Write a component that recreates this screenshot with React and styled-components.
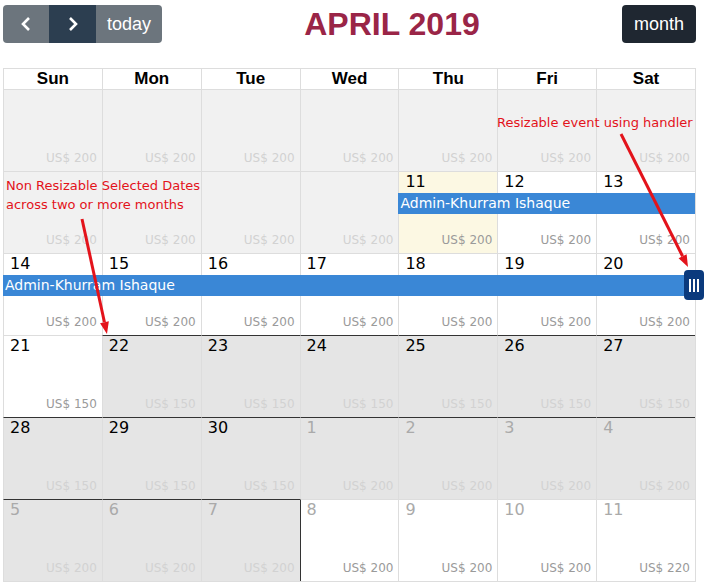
import React from "react";
import styled, { createGlobalStyle } from "styled-components";

const GlobalStyle = createGlobalStyle`
  body {
    margin: 0;
    background: #fff;
    font-family: "DejaVu Sans", Verdana, sans-serif;
  }
  * {
    box-sizing: border-box;
  }
`;

const Root = styled.div`
  position: relative;
  width: 705px;
  height: 588px;
  padding: 5px 9px 0 3px;
`;

const Toolbar = styled.div`
  display: flex;
  justify-content: space-between;
  align-items: center;
  height: 38px;
`;

const ButtonGroup = styled.div`
  display: flex;
  border-radius: 4px;
  overflow: hidden;
`;

const Button = styled.button`
  display: flex;
  align-items: center;
  justify-content: center;
  height: 38px;
  width: ${(p) => p.$w}px;
  padding: 0;
  border: none;
  border-radius: ${(p) => (p.$alone ? "4px" : "0")};
  background: ${(p) => p.$bg};
  color: #fff;
  font-family: "Liberation Sans", Arial, sans-serif;
  font-size: 18px;
`;

const Title = styled.h2`
  margin: 0;
  font-family: "Liberation Sans", Arial, sans-serif;
  font-weight: bold;
  font-size: 32px;
  line-height: 38px;
  color: #9a2547;
`;

const Calendar = styled.div`
  margin-top: 25px;
  border-right: 1px solid #ddd;
  border-bottom: 1px solid #ddd;
`;

const HeadRow = styled.div`
  display: grid;
  grid-template-columns: repeat(7, 1fr);
`;

const HeadCell = styled.div`
  height: 21px;
  border-top: 1px solid #ddd;
  border-left: 1px solid #ddd;
  text-align: center;
  font-family: "Liberation Sans", Arial, sans-serif;
  font-weight: bold;
  font-size: 17px;
  line-height: 20px;
  color: #000;
`;

const Week = styled.div`
  display: grid;
  grid-template-columns: repeat(7, 1fr);
  grid-template-rows: 22px 21px 1fr;
  height: 82px;
`;

const Cell = styled.div`
  grid-row: 1 / -1;
  grid-column: ${(p) => p.$col};
  display: flex;
  flex-direction: column;
  padding: 0 5px 5px 6px;
  border-top: 1px solid ${(p) => (p.$topDark ? "#333" : "#ddd")};
  border-left: 1px solid ${(p) => (p.$leftDark ? "#333" : "#ddd")};
  background: ${(p) => p.$bg};
`;

const DayNum = styled.div`
  height: 20px;
  font-size: 16px;
  line-height: 20px;
  color: ${(p) => (p.$muted ? "#aaa" : "#000")};
`;

const Price = styled.div`
  margin-top: auto;
  text-align: right;
  font-size: 12px;
  line-height: 16px;
  color: ${(p) => (p.$faint ? "#d2d2d2" : "#9a9a9a")};
`;

const Event = styled.div`
  position: relative;
  z-index: 1;
  grid-row: 2;
  grid-column: ${(p) => p.$span};
  height: 21px;
  padding-left: 2px;
  background: #3a87d6;
  color: #fff;
  font-size: 14px;
  line-height: 21px;
  white-space: nowrap;
`;

const Handle = styled.div`
  position: absolute;
  top: -5px;
  right: -9px;
  width: 20px;
  height: 30px;
  display: flex;
  align-items: center;
  justify-content: center;
  gap: 2px;
  border-radius: 4px;
  background: #0b3a7d;
`;

const Grip = styled.span`
  width: 2px;
  height: 13px;
  background: #fff;
`;

const Note = styled.div`
  position: absolute;
  left: ${(p) => p.$x}px;
  top: ${(p) => p.$y}px;
  font-size: 13px;
  line-height: 19px;
  color: #e3131b;
  white-space: nowrap;
`;

const Arrows = styled.svg`
  position: absolute;
  left: 0;
  top: 0;
  pointer-events: none;
  z-index: 2;
`;

const heads = ["Sun", "Mon", "Tue", "Wed", "Thu", "Fri", "Sat"];

const GRAY = "#f1f1f1";
const SEL = "#e5e5e5";
const WHITE = "#fff";
const TODAY = "#fcf8e3";

const disabled = () => ({ bg: GRAY, price: "200", faint: true });

const weeks = [
  {
    cells: Array.from({ length: 7 }, disabled),
  },
  {
    cells: [
      disabled(),
      disabled(),
      disabled(),
      disabled(),
      { num: 11, bg: TODAY, price: "200" },
      { num: 12, bg: WHITE, price: "200" },
      { num: 13, bg: WHITE, price: "200" },
    ],
    event: { span: "5 / 8" },
  },
  {
    cells: [14, 15, 16, 17, 18, 19, 20].map((n) => ({ num: n, bg: WHITE, price: "200" })),
    event: { span: "1 / 8", handle: true },
  },
  {
    cells: [
      { num: 21, bg: WHITE, price: "150" },
      ...[22, 23, 24, 25, 26, 27].map((n) => ({
        num: n,
        bg: SEL,
        price: "150",
        faint: true,
        topDark: true,
      })),
    ],
  },
  {
    cells: [
      ...[28, 29, 30].map((n) => ({ num: n, bg: SEL, price: "150", faint: true, topDark: true })),
      ...[1, 2, 3, 4].map((n) => ({
        num: n,
        muted: true,
        bg: SEL,
        price: "200",
        faint: true,
        topDark: true,
      })),
    ],
  },
  {
    cells: [
      ...[5, 6, 7].map((n) => ({ num: n, muted: true, bg: SEL, price: "200", faint: true, topDark: true })),
      { num: 8, muted: true, bg: WHITE, price: "200", leftDark: true },
      { num: 9, muted: true, bg: WHITE, price: "200" },
      { num: 10, muted: true, bg: WHITE, price: "200" },
      { num: 11, muted: true, bg: WHITE, price: "220" },
    ],
  },
];

function Arrow({ x1, y1, x2, y2 }) {
  const dx = x2 - x1;
  const dy = y2 - y1;
  const len = Math.hypot(dx, dy);
  const ux = dx / len;
  const uy = dy / len;
  const bx = x2 - ux * 12;
  const by = y2 - uy * 12;
  const px = -uy * 4.5;
  const py = ux * 4.5;
  return (
    <g>
      <line x1={x1} y1={y1} x2={bx} y2={by} stroke="#e3131b" strokeWidth="3" />
      <polygon
        points={`${x2},${y2} ${bx + px},${by + py} ${bx - px},${by - py}`}
        fill="#e3131b"
      />
    </g>
  );
}

const Chevron = ({ dir }) => (
  <svg width="10" height="16" viewBox="0 0 10 16">
    <polyline
      points={dir === "left" ? "8,2 2,8 8,14" : "2,2 8,8 2,14"}
      fill="none"
      stroke="#fff"
      strokeWidth="2.6"
    />
  </svg>
);

export default function App() {
  return (
    <>
      <GlobalStyle />
      <Root>
        <Toolbar>
          <ButtonGroup>
            <Button $w={46} $bg="#6c757d">
              <Chevron dir="left" />
            </Button>
            <Button $w={47} $bg="#2c3e50">
              <Chevron dir="right" />
            </Button>
            <Button $w={66} $bg="#6c757d">
              today
            </Button>
          </ButtonGroup>
          <Title>APRIL 2019</Title>
          <Button $w={74} $bg="#1f2731" $alone>
            month
          </Button>
        </Toolbar>

        <Calendar>
          <HeadRow>
            {heads.map((h) => (
              <HeadCell key={h}>{h}</HeadCell>
            ))}
          </HeadRow>
          {weeks.map((w, wi) => (
            <Week key={wi}>
              {w.cells.map((c, ci) => (
                <Cell
                  key={ci}
                  $col={ci + 1}
                  $bg={c.bg}
                  $topDark={c.topDark}
                  $leftDark={c.leftDark}
                >
                  <DayNum $muted={c.muted}>{c.num ?? ""}</DayNum>
                  <Price $faint={c.faint}>US$ {c.price}</Price>
                </Cell>
              ))}
              {w.event && (
                <Event $span={w.event.span}>
                  Admin-Khurram Ishaque
                  {w.event.handle && (
                    <Handle>
                      <Grip />
                      <Grip />
                      <Grip />
                    </Handle>
                  )}
                </Event>
              )}
            </Week>
          ))}
        </Calendar>

        <Note $x={497} $y={113}>
          Resizable event using handler
        </Note>
        <Note $x={6} $y={176}>
          Non Resizable Selected Dates
          <br />
          across two or more months
        </Note>
        <Arrows width="705" height="588">
          <Arrow x1={621} y1={134} x2={688} y2={267} />
          <Arrow x1={82} y1={219} x2={107} y2={334} />
        </Arrows>
      </Root>
    </>
  );
}
